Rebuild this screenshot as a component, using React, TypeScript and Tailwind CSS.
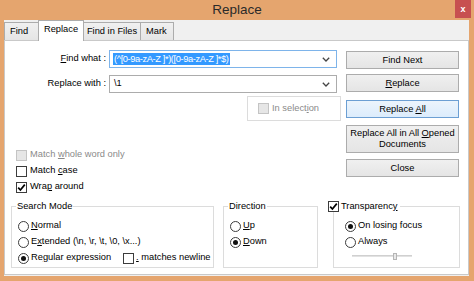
import React from "react";

const Check = ({ checked = false, disabled = false }: { checked?: boolean; disabled?: boolean }) => (
  <span
    className={
      disabled
        ? "w-[11px] h-[11px] shrink-0 border border-[#c4c4c4] bg-[#e6e6e6] flex items-center justify-center"
        : "w-[11px] h-[11px] shrink-0 border border-[#3c3c3c] bg-white flex items-center justify-center"
    }
  >
    {checked && (
      <svg width="9" height="9" viewBox="0 0 9 9">
        <path d="M1.2 4.6 L3.4 7 L7.8 1.6" fill="none" stroke="#000" strokeWidth="1.7" />
      </svg>
    )}
  </span>
);

const Radio = ({ checked = false }: { checked?: boolean }) => (
  <span className="w-[11px] h-[11px] shrink-0 rounded-full border border-[#3c3c3c] bg-white flex items-center justify-center">
    {checked && <span className="w-[5px] h-[5px] rounded-full bg-[#111]" />}
  </span>
);

const Chevron = () => (
  <svg width="8" height="5" viewBox="0 0 8 5" className="shrink-0">
    <path d="M0.8 0.8 L4 4 L7.2 0.8" fill="none" stroke="#444" strokeWidth="1.3" />
  </svg>
);

const Btn = ({
  children,
  className = "",
  focused = false,
}: {
  children: React.ReactNode;
  className?: string;
  focused?: boolean;
}) => (
  <div
    className={
      (focused
        ? "border-[#6c9fd3] bg-gradient-to-b from-[#ecf4fc] to-[#dcecfc] "
        : "border-[#acacac] bg-gradient-to-b from-[#f0f0f0] to-[#e5e5e5] ") +
      "w-[113px] border flex items-center justify-center text-center leading-[11px] " +
      className
    }
  >
    {children}
  </div>
);

export default function App() {
  return (
    <div
      className="w-[474px] h-[281px] bg-[#e5a56e] flex flex-col text-[9.3px] text-black overflow-hidden"
      style={{ fontFamily: '"Liberation Sans", Arial, sans-serif' }}
    >
      {/* Title bar */}
      <div className="h-[20px] relative flex items-center justify-center shrink-0">
        <span className="text-[13.5px] text-[#2a2a2a] leading-none">Replace</span>
        <div className="absolute right-[3px] top-0 w-[16px] h-[18px] bg-[#c75050] flex items-center justify-center">
          <span className="text-white text-[9px] font-bold leading-none">x</span>
        </div>
      </div>

      {/* Body */}
      <div className="flex-1 ml-[4px] mr-[5px] mb-[5px] bg-[#f0f0f0] flex flex-col">
        {/* Tabs */}
        <div className="h-[20px] flex items-end shrink-0 relative z-10">
          <div className="w-[35px] h-[18px] border border-b-0 border-[#acacac] bg-gradient-to-b from-[#f0f0f0] to-[#e5e5e5] flex items-center pl-[5px]">
            Find
          </div>
          <div className="w-[46px] h-[21px] -ml-[1px] -mb-[1px] border border-b-0 border-[#acacac] bg-white flex items-center justify-center pb-[2px]">
            Replace
          </div>
          <div className="w-[58px] h-[18px] -ml-[1px] border border-b-0 border-[#acacac] bg-gradient-to-b from-[#f0f0f0] to-[#e5e5e5] flex items-center justify-center">
            Find in Files
          </div>
          <div className="w-[34px] h-[18px] -ml-[1px] border border-b-0 border-[#acacac] bg-gradient-to-b from-[#f0f0f0] to-[#e5e5e5] flex items-center pl-[5px]">
            Mark
          </div>
        </div>

        {/* Panel */}
        <div className="h-[235px] bg-white border border-[#c9c9c9] flex flex-col">
          {/* Top section */}
          <div className="flex pt-[9px]">
            {/* Left column */}
            <div className="w-[337px] flex flex-col">
              <div className="h-[18px] flex items-center">
                <div className="w-[104px] text-right pr-[3px]">
                  <span className="underline">F</span>ind what :
                </div>
                <div className="w-[228px] h-[18px] border border-[#7eb4ea] bg-white flex items-center pl-[3px] pr-[6px]">
                  <span className="bg-[#3399ff] text-white leading-[12px] px-[1px] whitespace-pre tracking-[-0.4px]">
                    (^[0-9a-zA-Z ]*)([0-9a-zA-Z ]*$)
                  </span>
                  <span className="flex-1" />
                  <Chevron />
                </div>
              </div>
              <div className="h-[18px] flex items-center mt-[7px]">
                <div className="w-[104px] text-right pr-[3px]">Replace with :</div>
                <div className="w-[228px] h-[18px] border border-[#acacac] bg-white flex items-center pl-[4px] pr-[6px]">
                  <span>\1</span>
                  <span className="flex-1" />
                  <Chevron />
                </div>
              </div>
              <div className="ml-[242px] mt-[3px] w-[94px] h-[25px] border border-[#dcdcdc] flex items-center pl-[10px] gap-[3px] text-[#8a8a8a]">
                <Check disabled />
                <span>
                  In select<span className="underline">i</span>on
                </span>
              </div>
              <div className="mt-[26px] ml-[11px] flex flex-col">
                <div className="h-[16px] flex items-center gap-[3px] text-[#8a8a8a]">
                  <Check disabled />
                  <span>
                    Match <span className="underline">w</span>hole word only
                  </span>
                </div>
                <div className="h-[16px] flex items-center gap-[3px]">
                  <Check />
                  <span>
                    Match <span className="underline">c</span>ase
                  </span>
                </div>
                <div className="h-[16px] flex items-center gap-[3px]">
                  <Check checked />
                  <span>
                    Wra<span className="underline">p</span> around
                  </span>
                </div>
              </div>
            </div>

            {/* Right column: buttons */}
            <div className="ml-[4px] flex flex-col">
              <Btn className="h-[18px] mt-[1px]">Find Next</Btn>
              <Btn className="h-[18px] mt-[5px]">
                <span>
                  <span className="underline">R</span>eplace
                </span>
              </Btn>
              <Btn className="h-[18px] mt-[8px]" focused>
                <span>
                  Replace <span className="underline">A</span>ll
                </span>
              </Btn>
              <Btn className="h-[28px] mt-[7px]">
                <span>
                  Replace All in All <span className="underline">O</span>pened
                  <br />
                  Documents
                </span>
              </Btn>
              <Btn className="h-[18px] mt-[6px]">Close</Btn>
            </div>
          </div>

          {/* Group boxes */}
          <div className="flex ml-[6px] mt-[5px]">
            <fieldset className="w-[203px] h-[68px] border border-[#dcdcdc]">
              <legend className="ml-[4px] px-[1px] leading-[12px]">Search Mode</legend>
              <div className="flex flex-col pl-[6px] mt-[6px]">
                <div className="h-[16px] flex items-center gap-[2px]">
                  <Radio />
                  <span>
                    <span className="underline">N</span>ormal
                  </span>
                </div>
                <div className="h-[16px] flex items-center gap-[2px]">
                  <Radio />
                  <span>
                    E<span className="underline">x</span>tended (\n, \r, \t, \0, \x...)
                  </span>
                </div>
                <div className="h-[16px] flex items-center gap-[2px]">
                  <Radio checked />
                  <span>
                    Re<span className="underline">g</span>ular expression
                  </span>
                  <span className="ml-[10px] flex items-center gap-[2px]">
                    <Check />
                    <span>
                      <span className="underline">.</span> matches newline
                    </span>
                  </span>
                </div>
              </div>
            </fieldset>

            <fieldset className="ml-[9px] w-[95px] h-[68px] border border-[#dcdcdc]">
              <legend className="ml-[4px] px-[1px] leading-[12px]">Direction</legend>
              <div className="flex flex-col pl-[6px] mt-[6px]">
                <div className="h-[16px] flex items-center gap-[2px]">
                  <Radio />
                  <span>
                    <span className="underline">U</span>p
                  </span>
                </div>
                <div className="h-[16px] flex items-center gap-[2px]">
                  <Radio checked />
                  <span>
                    <span className="underline">D</span>own
                  </span>
                </div>
              </div>
            </fieldset>

            <fieldset className="ml-[15px] w-[127px] h-[68px] border border-[#dcdcdc]">
              <legend className="-ml-[6px] pr-[2px] leading-[12px] flex items-center gap-[2px]">
                <Check checked />
                <span>
                  Transparenc<span className="underline">y</span>
                </span>
              </legend>
              <div className="flex flex-col pl-[11px] mt-[6px]">
                <div className="h-[16px] flex items-center gap-[2px]">
                  <Radio checked />
                  <span>On losing focus</span>
                </div>
                <div className="h-[16px] flex items-center gap-[2px]">
                  <Radio />
                  <span>Always</span>
                </div>
                <div className="h-[12px] ml-[7px] w-[60px] flex items-center relative">
                  <div className="w-full h-[2px] bg-[#e2e2e2] border-t border-[#d0d0d0]" />
                  <div className="absolute left-[41px] top-[3px] w-[4px] h-[7px] bg-[#e8e8e8] border border-[#b5b5b5]" />
                </div>
              </div>
            </fieldset>
          </div>
        </div>
      </div>
    </div>
  );
}
